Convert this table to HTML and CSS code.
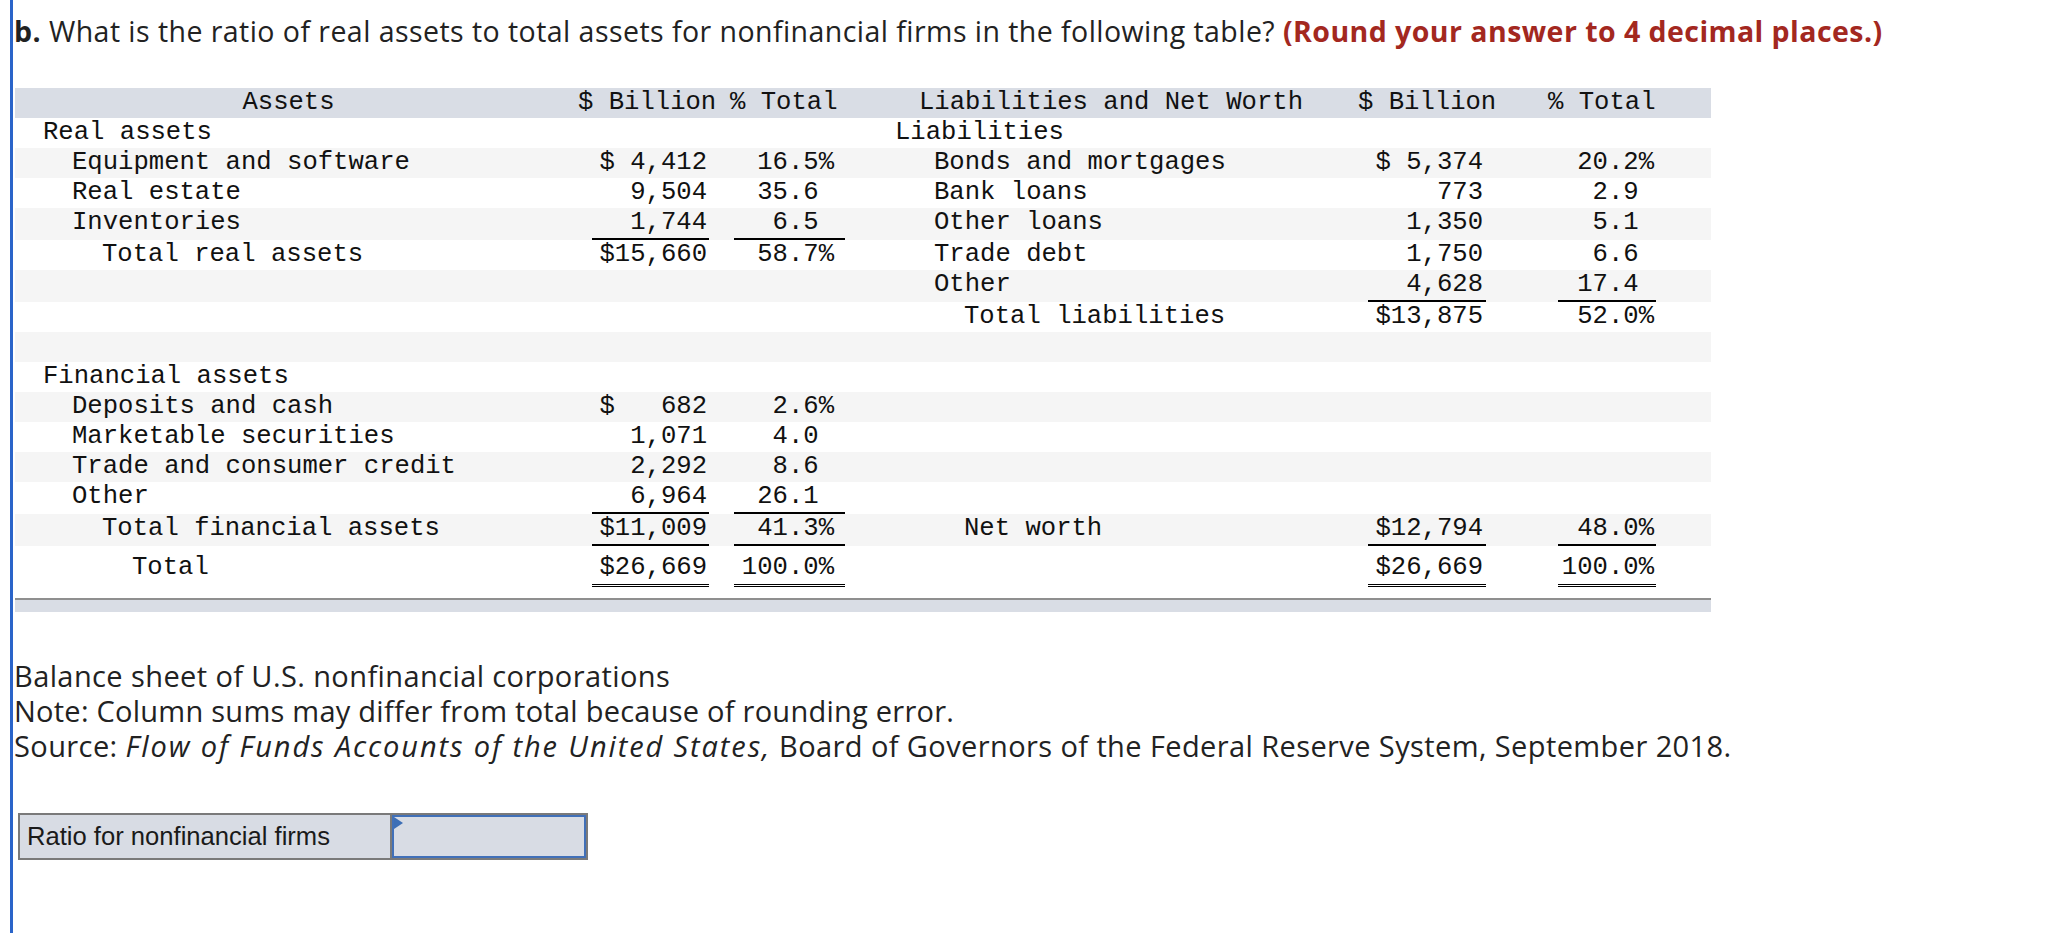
FILE: index.html
```html
<!DOCTYPE html>
<html lang="en">
<head>
<meta charset="utf-8">
<title>Balance sheet question</title>
<link rel="stylesheet" href="styles.css">
</head>
<body>
<div class="page">
  <p class="question"><b>b.</b> What is the ratio of real assets to total assets for nonfinancial firms in the following table? <span class="hint">(Round your answer to 4 decimal places.)</span></p>

  <div class="sheet">
    <div class="row head">
      <div class="h1">Assets</div>
      <div class="h2">$ Billion</div>
      <div class="h3">% Total</div>
      <div class="h4">Liabilities and Net Worth</div>
      <div class="h5">$ Billion</div>
      <div class="h6">% Total</div>
    </div>

    <div class="row">
      <div class="lab l0">Real assets</div>
      <div class="n2"></div>
      <div class="n3"></div>
      <div class="lab r0">Liabilities</div>
      <div class="n5"></div>
      <div class="n6"></div>
    </div>

    <div class="row stripe">
      <div class="lab l1">Equipment and software</div>
      <div class="n2"><span class="box">$ 4,412</span></div>
      <div class="n3"><span class="box">16.5<span class="pct">%</span></span></div>
      <div class="lab r1">Bonds and mortgages</div>
      <div class="n5"><span class="box">$ 5,374</span></div>
      <div class="n6"><span class="box">20.2<span class="pct">%</span></span></div>
    </div>

    <div class="row">
      <div class="lab l1">Real estate</div>
      <div class="n2"><span class="box">9,504</span></div>
      <div class="n3"><span class="box">35.6<span class="pct off">%</span></span></div>
      <div class="lab r1">Bank loans</div>
      <div class="n5"><span class="box">773</span></div>
      <div class="n6"><span class="box">2.9<span class="pct off">%</span></span></div>
    </div>

    <div class="row stripe">
      <div class="lab l1">Inventories</div>
      <div class="n2"><span class="box under">1,744</span></div>
      <div class="n3"><span class="box under">6.5<span class="pct off">%</span></span></div>
      <div class="lab r1">Other loans</div>
      <div class="n5"><span class="box">1,350</span></div>
      <div class="n6"><span class="box">5.1<span class="pct off">%</span></span></div>
    </div>

    <div class="row">
      <div class="lab l2">Total real assets</div>
      <div class="n2"><span class="box">$15,660</span></div>
      <div class="n3"><span class="box">58.7<span class="pct">%</span></span></div>
      <div class="lab r1">Trade debt</div>
      <div class="n5"><span class="box">1,750</span></div>
      <div class="n6"><span class="box">6.6<span class="pct off">%</span></span></div>
    </div>

    <div class="row stripe">
      <div class="lab l0"></div>
      <div class="n2"></div>
      <div class="n3"></div>
      <div class="lab r1">Other</div>
      <div class="n5"><span class="box under">4,628</span></div>
      <div class="n6"><span class="box under">17.4<span class="pct off">%</span></span></div>
    </div>

    <div class="row">
      <div class="lab l0"></div>
      <div class="n2"></div>
      <div class="n3"></div>
      <div class="lab r2">Total liabilities</div>
      <div class="n5"><span class="box">$13,875</span></div>
      <div class="n6"><span class="box">52.0<span class="pct">%</span></span></div>
    </div>

    <div class="row stripe">
      <div class="lab l0"></div>
      <div class="n2"></div>
      <div class="n3"></div>
      <div class="lab r0"></div>
      <div class="n5"></div>
      <div class="n6"></div>
    </div>

    <div class="row">
      <div class="lab l0">Financial assets</div>
      <div class="n2"></div>
      <div class="n3"></div>
      <div class="lab r0"></div>
      <div class="n5"></div>
      <div class="n6"></div>
    </div>

    <div class="row stripe">
      <div class="lab l1">Deposits and cash</div>
      <div class="n2"><span class="box">$   682</span></div>
      <div class="n3"><span class="box">2.6<span class="pct">%</span></span></div>
      <div class="lab r0"></div>
      <div class="n5"></div>
      <div class="n6"></div>
    </div>

    <div class="row">
      <div class="lab l1">Marketable securities</div>
      <div class="n2"><span class="box">1,071</span></div>
      <div class="n3"><span class="box">4.0<span class="pct off">%</span></span></div>
      <div class="lab r0"></div>
      <div class="n5"></div>
      <div class="n6"></div>
    </div>

    <div class="row stripe">
      <div class="lab l1">Trade and consumer credit</div>
      <div class="n2"><span class="box">2,292</span></div>
      <div class="n3"><span class="box">8.6<span class="pct off">%</span></span></div>
      <div class="lab r0"></div>
      <div class="n5"></div>
      <div class="n6"></div>
    </div>

    <div class="row">
      <div class="lab l1">Other</div>
      <div class="n2"><span class="box under">6,964</span></div>
      <div class="n3"><span class="box under">26.1<span class="pct off">%</span></span></div>
      <div class="lab r0"></div>
      <div class="n5"></div>
      <div class="n6"></div>
    </div>

    <div class="row stripe">
      <div class="lab l2">Total financial assets</div>
      <div class="n2"><span class="box under">$11,009</span></div>
      <div class="n3"><span class="box under">41.3<span class="pct">%</span></span></div>
      <div class="lab r2">Net worth</div>
      <div class="n5"><span class="box under">$12,794</span></div>
      <div class="n6"><span class="box under">48.0<span class="pct">%</span></span></div>
    </div>

    <div class="row total">
      <div class="lab l3">Total</div>
      <div class="n2"><span class="box dbl">$26,669</span></div>
      <div class="n3"><span class="box dbl">100.0<span class="pct">%</span></span></div>
      <div class="lab r0"></div>
      <div class="n5"><span class="box dbl">$26,669</span></div>
      <div class="n6"><span class="box dbl">100.0<span class="pct">%</span></span></div>
    </div>

    <div class="sheet-foot"></div>
  </div>

  <div class="notes">
    <p>Balance sheet of U.S. nonfinancial corporations</p>
    <p class="tight">Note: Column sums may differ from total because of rounding error.</p>
    <p>Source: <i>Flow of Funds Accounts of the United States,</i> Board of Governors of the Federal Reserve System, September 2018.</p>
  </div>

  <div class="answer">
    <div class="answer-label">Ratio for nonfinancial firms</div>
    <div class="answer-input"><span class="flag"></span></div>
  </div>
</div>
</body>
</html>
```
FILE: styles.css
```css
html, body {
  margin: 0;
  padding: 0;
  background: #ffffff;
}

.page {
  margin-left: 10px;
  border-left: 3px solid #2a64c9;
  min-height: 933px;
  box-sizing: border-box;
  padding: 13px 0 0 1px;
  font-family: "Open Sans", "Liberation Sans", sans-serif;
  color: #222222;
}

.question {
  margin: 0;
  font-size: 28.5px;
  letter-spacing: 0.45px;
  line-height: 36px;
  white-space: nowrap;
}

.question b {
  font-weight: 700;
}

.question .hint {
  color: #a3281f;
  font-weight: 700;
}

/* ---------- balance sheet ---------- */

.sheet {
  margin: 39px 0 0 1px;
  width: 1696px;
  font-family: "Liberation Mono", "DejaVu Sans Mono", monospace;
  font-size: 25.6px;
  color: #111111;
}

.row {
  display: grid;
  grid-template-columns: 547px 156px 148px 490px 144px 211px;
  min-height: 30px;
  line-height: 30px;
  background: #ffffff;
}

.row.stripe {
  background: #f5f5f5;
}

.row.head {
  background: #d9dde5;
  white-space: pre;
}

.h1, .h4 {
  text-align: center;
}

.h2 { padding: 0 0 0 16px; }
.h3 { padding: 0 0 0 12px; }
.h5 { padding: 0 0 0 2px; }
.h6 { padding: 0 0 0 48px; }

.lab {
  white-space: pre;
}

.l0 { padding-left: 28px; }
.l1 { padding-left: 57px; }
.l2 { padding-left: 87px; }
.l3 { padding-left: 117px; }

.r0 { padding-left: 29px; }
.r1 { padding-left: 68px; }
.r2 { padding-left: 98px; }

.n2 { padding: 0 9px 0 30px; }
.n3 { padding: 0 21px 0 16px; }
.n5 { padding: 0 14px 0 12px; }
.n6 { padding: 0 55px 0 58px; }

.box {
  display: block;
  white-space: pre;
  text-align: right;
}

.n2 .box { padding-right: 2px; }
.n3 .box { padding-right: 11px; }
.n5 .box { padding-right: 3px; }
.n6 .box { padding-right: 2px; }

.pct.off {
  visibility: hidden;
}

.box.under {
  border-bottom: 2px solid #000000;
}

.box.dbl {
  border-bottom: 3px double #000000;
}

.row.total {
  line-height: 33px;
  padding: 5px 0 11px;
}

.sheet-foot {
  height: 12px;
  background: #d9dde5;
  border-top: 2px solid #8f8f8f;
}

/* ---------- notes ---------- */

.notes {
  margin-top: 46px;
  font-size: 29px;
  letter-spacing: 0.4px;
  line-height: 35px;
}

.notes p {
  margin: 0;
  white-space: nowrap;
}

.notes p.tight {
  letter-spacing: 0.25px;
}

.notes i {
  letter-spacing: 1.9px;
}

/* ---------- answer ---------- */

.answer {
  margin: 50px 0 0 4px;
  display: flex;
  width: fit-content;
  border: 2px solid #7a7a7a;
  background: #d8dce4;
}

.answer-label {
  box-sizing: border-box;
  width: 372px;
  height: 43px;
  padding-left: 7px;
  border-right: 2px solid #7a7a7a;
  font-family: "Liberation Sans", Arial, sans-serif;
  font-size: 25.6px;
  letter-spacing: 0;
  line-height: 43px;
  color: #1a1a1a;
}

.answer-input {
  position: relative;
  box-sizing: border-box;
  width: 194px;
  height: 43px;
  border: 2px solid #4170b8;
}

.flag {
  position: absolute;
  top: 0;
  left: 0;
  width: 0;
  height: 0;
  border-left: 9px solid #3d6fb6;
  border-top: 6px solid transparent;
  border-bottom: 6px solid transparent;
}
```
